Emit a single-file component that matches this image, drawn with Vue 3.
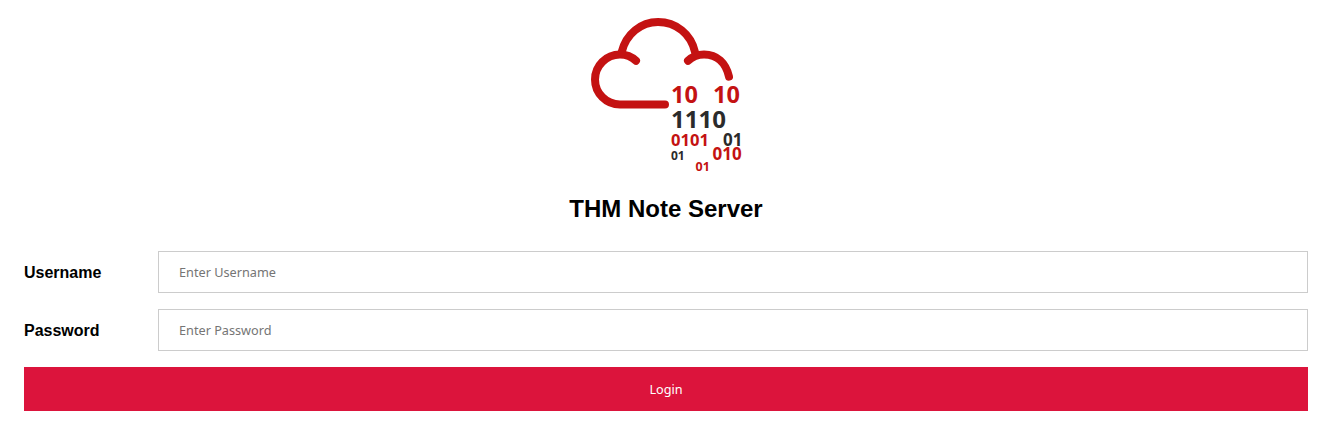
<template>
  <div class="page">
    <svg class="logo" viewBox="586 12 160 166" role="img" aria-label="THM Note Server logo">
      <path class="cloud" d="M665 104.500H620A25 25 0 0 1 620 54.500C626 54.500 632 57 636 60.700" />
      <path class="cloud" d="M621.700 52C626 34 641 22 658 22C676 22 691 34 695 52" />
      <path class="cloud" d="M688 60.700C692 57 698 54.500 704 54.500C717 54.500 726 63 729 76.700" />
      <text v-for="bit in bits" :key="bit.x + '-' + bit.y" :x="bit.x" :y="bit.y" :font-size="bit.size" :class="bit.dark ? 'dark' : 'red'">{{ bit.text }}</text>
    </svg>
    <h1 class="title">THM Note Server</h1>
    <form class="login-form" @submit.prevent>
      <label class="row">
        <span class="label">Username</span>
        <input class="field" type="text" placeholder="Enter Username">
      </label>
      <label class="row">
        <span class="label">Password</span>
        <input class="field" type="password" placeholder="Enter Password">
      </label>
      <button class="submit" type="submit">Login</button>
    </form>
  </div>
</template>

<script setup>
const bits = [
  { text: '10', x: 671, y: 102.5, size: 23.5 },
  { text: '10', x: 713, y: 102.5, size: 23.5 },
  { text: '1110', x: 671, y: 127.5, size: 24, dark: true },
  { text: '0101', x: 671, y: 146, size: 16.6 },
  { text: '01', x: 723, y: 146, size: 17, dark: true },
  { text: '010', x: 712.5, y: 160, size: 17 },
  { text: '01', x: 671, y: 160, size: 12, dark: true },
  { text: '01', x: 695.5, y: 171, size: 12.5 }
]
</script>

<style>
body {
  background: #fff;
}
</style>

<style scoped>
.page {
  padding: 12px 24px 31px;
  font-family: "Liberation Sans", Arial, sans-serif;
}

.logo {
  display: block;
  width: 160px;
  height: 166px;
  margin: 0 auto;
}

.cloud {
  fill: none;
  stroke: #c41212;
  stroke-width: 8;
  stroke-linecap: round;
}

.logo text {
  font-family: "Open Sans", "Noto Sans", sans-serif;
  font-weight: 700;
}

.red {
  fill: #c41212;
}

.dark {
  fill: #2b2b2b;
}

.title {
  margin: 17px 0 28px;
  font-size: 24px;
  font-weight: 700;
  line-height: 28px;
  text-align: center;
  color: #000;
}

.login-form {
  display: flex;
  flex-direction: column;
  gap: 16px;
}

.row {
  display: flex;
  align-items: center;
}

.label {
  width: 134px;
  flex: none;
  padding-top: 2px;
  font-size: 16px;
  font-weight: 700;
  color: #000;
}

.field {
  flex: 1;
  min-width: 0;
  height: 42px;
  box-sizing: border-box;
  padding: 0 20px;
  border: 1px solid #ccc;
  border-radius: 0;
  background: #fff;
  font-family: "Noto Sans", sans-serif;
  font-size: 12.7px;
  outline: none;
}

.field::placeholder {
  color: #757575;
  opacity: 1;
}

.submit {
  height: 44px;
  border: none;
  background: #dc143c;
  color: #fff;
  font-family: "Noto Sans", sans-serif;
  font-size: 12.7px;
  cursor: pointer;
}
</style>
